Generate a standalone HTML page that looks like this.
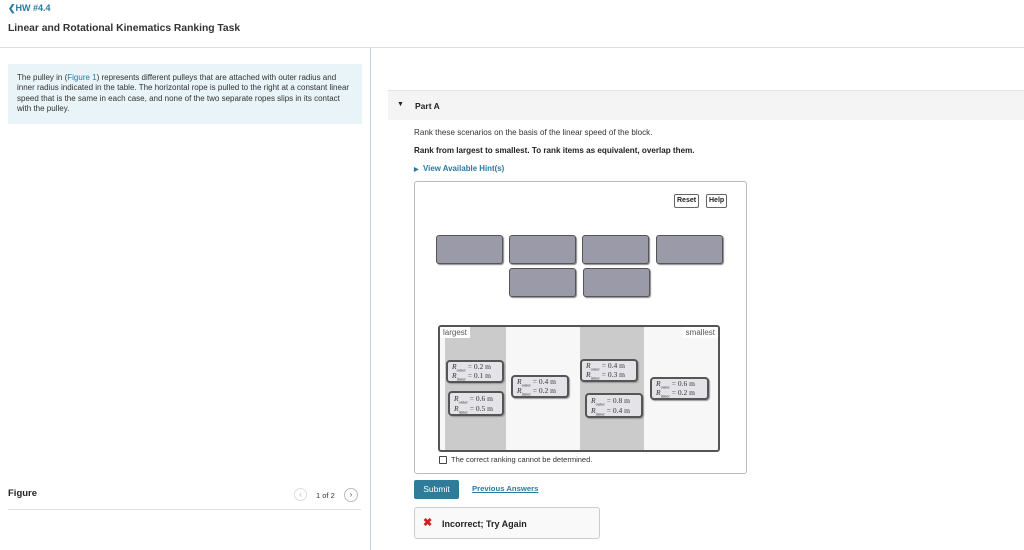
<!DOCTYPE html>
<html><head><meta charset="utf-8"><style>
*{margin:0;padding:0;box-sizing:border-box}
body{width:1024px;height:550px;position:relative;background:#fff;font-family:"Liberation Sans",Arial,sans-serif;color:#222;overflow:hidden}
.a{position:absolute}
.tile{position:absolute;height:29px;width:67px;background:#9b9aa8;border:1px solid #555;border-radius:3px;box-shadow:1px 1px 1px #888}
.card{position:absolute;background:#e4e4e8;border:2px solid #555;border-radius:4px;font-family:"Liberation Serif",serif;font-size:7.5px;line-height:8.5px;padding:1px 4px;color:#333;white-space:nowrap;box-shadow:1px 1px 1px #999}
.card sub{font-size:4.5px;line-height:0}
.btn{position:absolute;border:1px solid #666;border-radius:2px;font-size:7px;font-weight:bold;padding:1px 2px;background:#fff;line-height:10px}
</style></head><body>
<div class="a" style="left:8px;top:3px;font-size:9px;font-weight:bold;color:#2a7aa0">&#10094;HW #4.4</div>
<div class="a" style="left:8px;top:23px;font-size:10.3px;font-weight:bold;color:#333">Linear and Rotational Kinematics Ranking Task</div>
<div class="a" style="left:0;top:47px;width:1024px;height:1px;background:#ddd"></div>
<div class="a" style="left:370px;top:48px;width:1px;height:502px;background:#c4d0dc"></div>
<div class="a" style="left:8px;top:64px;width:354px;height:60px;background:#e8f4f7;padding:9px 9px;font-size:8px;line-height:10.3px;color:#333">The pulley in (<span style="color:#2a7aa0">Figure 1</span>) represents different pulleys that are attached with outer radius and inner radius indicated in the table. The horizontal rope is pulled to the right at a constant linear speed that is the same in each case, and none of the two separate ropes slips in its contact with the pulley.</div>
<div class="a" style="left:8px;top:488px;font-size:9.5px;font-weight:bold">Figure</div>
<div class="a" style="left:294px;top:488px;width:13px;height:13px;border:1px solid #ddd;border-radius:50%;font-size:8px;color:#bbb;text-align:center;line-height:11px">&lsaquo;</div>
<div class="a" style="left:316px;top:491px;font-size:7.5px;color:#333">1 of 2</div>
<div class="a" style="left:344px;top:488px;width:14px;height:14px;border:1px solid #bbb;border-radius:50%;font-size:8px;color:#555;text-align:center;line-height:12px">&rsaquo;</div>
<div class="a" style="left:8px;top:509px;width:353px;height:1px;background:#e2e2e2"></div>

<div class="a" style="left:388px;top:90px;width:636px;height:30px;background:#f4f4f4;border-top:1px solid #e4e4e4"></div>
<div class="a" style="left:397px;top:101px;font-size:7px">&#9660;</div>
<div class="a" style="left:415px;top:101px;font-size:8.5px;font-weight:bold">Part A</div>
<div class="a" style="left:414px;top:128px;font-size:8.1px;color:#333">Rank these scenarios on the basis of the linear speed of the block.</div>
<div class="a" style="left:414px;top:146px;font-size:8.1px;font-weight:bold">Rank from largest to smallest. To rank items as equivalent, overlap them.</div>
<div class="a" style="left:414px;top:164px;font-size:7.9px;font-weight:bold;color:#2a7aa0"><span style="font-size:6px">&#9654;</span>&nbsp; View Available Hint(s)</div>

<div class="a" style="left:414px;top:181px;width:333px;height:293px;border:1px solid #bbb;border-radius:3px"></div>
<div class="btn" style="left:674px;top:194px">Reset</div>
<div class="btn" style="left:706px;top:194px">Help</div>
<div class="tile" style="left:436px;top:235px"></div>
<div class="tile" style="left:509px;top:235px"></div>
<div class="tile" style="left:582px;top:235px"></div>
<div class="tile" style="left:656px;top:235px"></div>
<div class="tile" style="left:509px;top:268px"></div>
<div class="tile" style="left:583px;top:268px"></div>

<div class="a" style="left:438px;top:325px;width:282px;height:127px;border:2px solid #555;border-radius:3px;background:#f7f7f7;overflow:hidden">
 <div class="a" style="left:5px;top:0;width:61px;height:125px;background:#cbcbcb"></div>
 <div class="a" style="left:140px;top:0;width:64px;height:125px;background:#cbcbcb"></div>
 <div class="a" style="left:0;top:0;background:#fff;font-size:8px;color:#555;padding:1px 3px">largest</div>
 <div class="a" style="right:0;top:0;background:#fff;font-size:8px;color:#555;padding:1px 3px">smallest</div>
</div>
<div class="card" style="left:446px;top:360px;width:58px"><i>R</i><sub>outer</sub> = 0.2 m<br><i>R</i><sub>inner</sub> = 0.1 m</div>
<div class="card" style="left:448px;top:391px;width:56px;line-height:9.5px"><i>R</i><sub>outer</sub> = 0.6 m<br><i>R</i><sub>inner</sub> = 0.5 m</div>
<div class="card" style="left:511px;top:375px;width:58px"><i>R</i><sub>outer</sub> = 0.4 m<br><i>R</i><sub>inner</sub> = 0.2 m</div>
<div class="card" style="left:580px;top:359px;width:58px"><i>R</i><sub>outer</sub> = 0.4 m<br><i>R</i><sub>inner</sub> = 0.3 m</div>
<div class="card" style="left:585px;top:393px;width:58px;line-height:9.5px"><i>R</i><sub>outer</sub> = 0.8 m<br><i>R</i><sub>inner</sub> = 0.4 m</div>
<div class="card" style="left:650px;top:377px;width:59px"><i>R</i><sub>outer</sub> = 0.6 m<br><i>R</i><sub>inner</sub> = 0.2 m</div>
<div class="a" style="left:439px;top:456px;width:8px;height:8px;border:1px solid #444;border-radius:1px"></div>
<div class="a" style="left:451px;top:455px;font-size:7.5px;color:#333">The correct ranking cannot be determined.</div>

<div class="a" style="left:414px;top:480px;width:45px;height:19px;background:#2f7b9a;border-radius:2px;color:#fff;font-size:8.5px;text-align:center;line-height:19px">Submit</div>
<div class="a" style="left:472px;top:484px;font-size:7.7px;font-weight:bold;color:#2a7aa0;text-decoration:underline">Previous Answers</div>
<div class="a" style="left:414px;top:507px;width:186px;height:32px;border:1px solid #ccc;border-radius:3px;background:#f9f9f9"></div>
<div class="a" style="left:423px;top:516px;font-size:11px;font-weight:bold;color:#d02020">&#10006;</div>
<div class="a" style="left:442px;top:519px;font-size:9px;font-weight:bold;color:#222">Incorrect; Try Again</div>
</body></html>
